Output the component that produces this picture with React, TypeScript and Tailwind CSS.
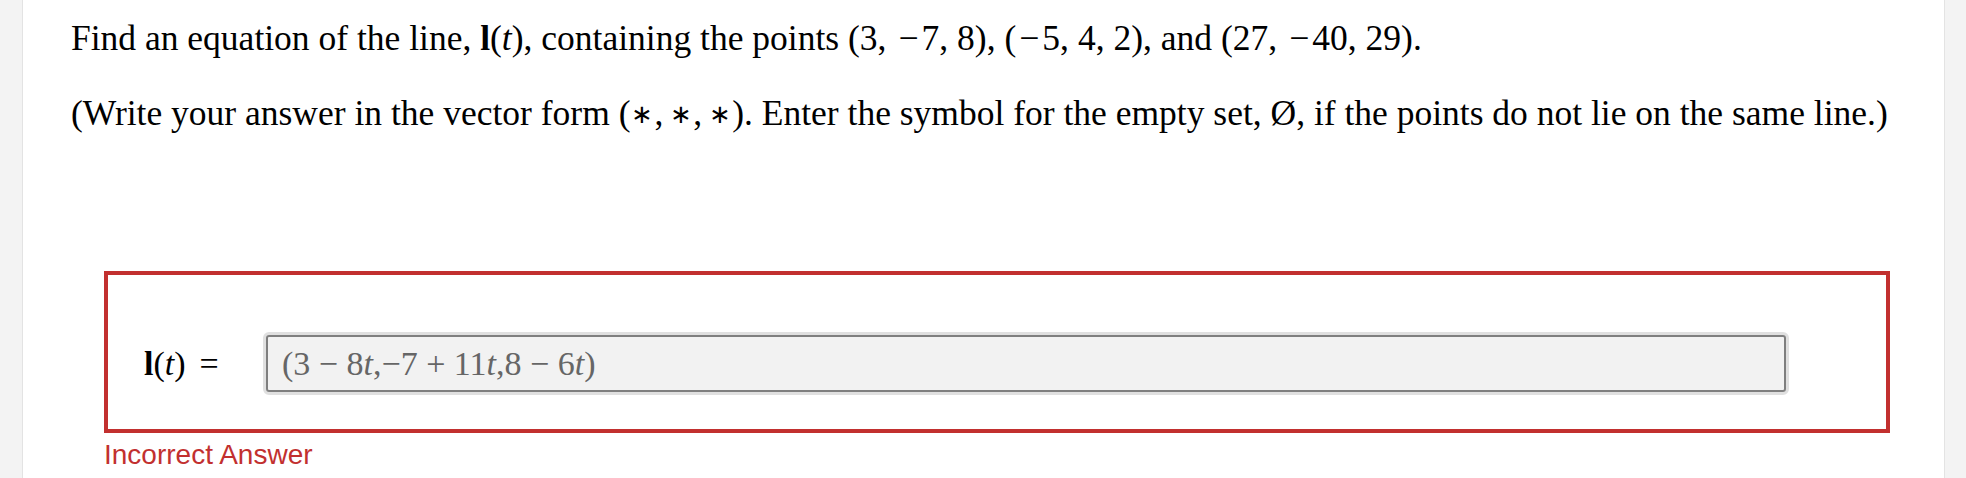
import React from "react";

const serif = { fontFamily: '"Liberation Serif", "Times New Roman", serif' };

function Minus() {
  return <span className="px-[3px]">−</span>;
}

function Pt({ a }: { a: React.ReactNode[] }) {
  return (
    <span>
      (
      {a.map((v, i) => (
        <span key={i}>
          {v}
          {i < a.length - 1 ? <span className="mr-[9px]">,</span> : null}
        </span>
      ))}
      )
    </span>
  );
}

function Star() {
  return <span className="text-[26px] relative top-[-2px] px-[1px]">∗</span>;
}

export default function App() {
  return (
    <div className="flex w-[1966px] h-[478px] bg-white overflow-hidden">
      <div className="w-[23px] shrink-0 bg-[#f3f3f3] border-r border-[#e3e3e3]" />
      <div className="flex-1 flex flex-col pl-[48px] pr-[54px] text-black" style={serif}>
        <p className="text-[35.5px] leading-[40px] mt-[18px] whitespace-nowrap">
          Find an equation of the line, <b>l</b>(<i>t</i>), containing the points{" "}
          <Pt a={["3", <><Minus />7</>, "8"]} />, <Pt a={[<><Minus />5</>, "4", "2"]} />, and{" "}
          <Pt a={["27", <><Minus />40</>, "29"]} />.
        </p>
        <p className="text-[35.5px] leading-[40px] mt-[35px] whitespace-nowrap">
          (Write your answer in the vector form (<Star />
          <span className="mr-[6px]">,</span>
          <Star />
          <span className="mr-[6px]">,</span>
          <Star />
          ). Enter the symbol for the empty set, Ø, if the points do not lie on the same line.)
        </p>
        <div className="ml-[33px] mt-[134px] h-[162px] border-[4px] border-[#c2302f] flex items-start pl-[36px] pr-[97px] pt-[57px]">
          <div className="flex items-center h-[63px] w-[119px] shrink-0 text-[34px]">
            <b>l</b>(<i>t</i>)<span className="ml-[14px]">=</span>
          </div>
          <div className="flex-1 h-[63px] rounded-[6px] border-[3px] border-[#e0e0e0]">
            <div className="h-full border-[2px] border-[#7f7f7f] rounded-[3px] bg-[#f2f2f2] flex items-center pl-[14px] text-[34px] text-[#666] whitespace-nowrap">
              (3 − 8<i>t</i>,−7 + 11<i>t</i>,8 − 6<i>t</i>)
            </div>
          </div>
        </div>
        <div
          className="ml-[33px] mt-[6px] text-[28px] leading-[32px] text-[#c2302f]"
          style={{ fontFamily: '"Liberation Sans", Arial, sans-serif' }}
        >
          Incorrect Answer
        </div>
      </div>
      <div className="w-[22px] shrink-0 bg-[#f3f3f3] border-l border-[#e3e3e3]" />
    </div>
  );
}
